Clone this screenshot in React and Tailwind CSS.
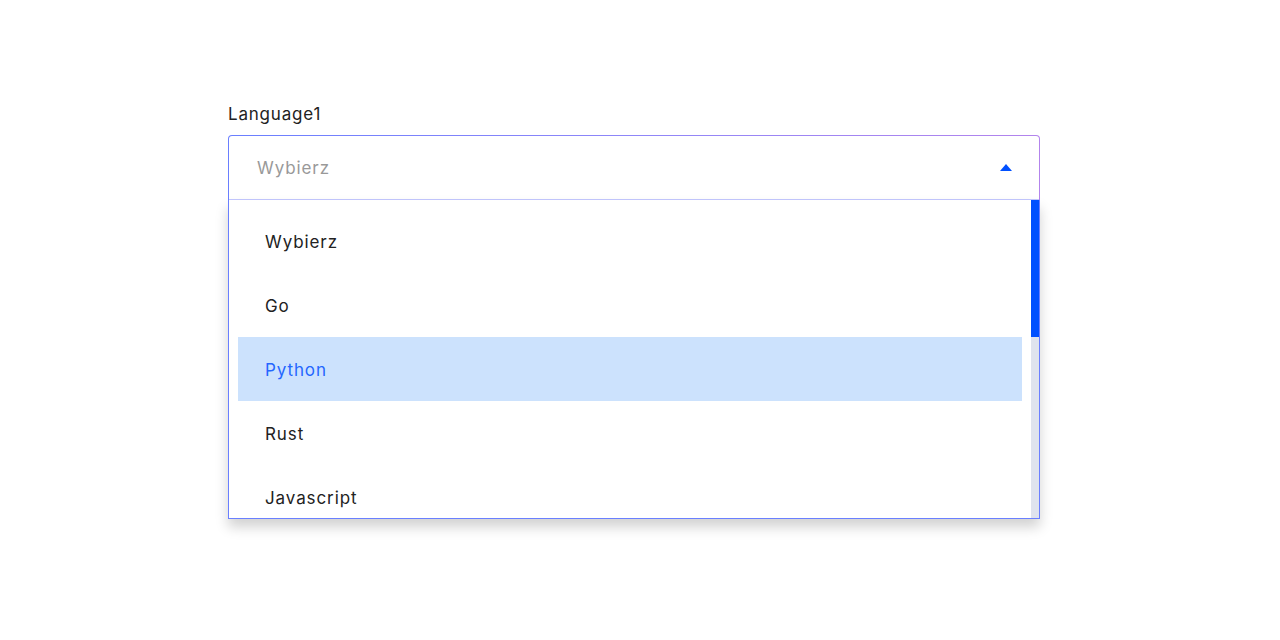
export default function App() {
  const items = ["Wybierz", "Go", "Python", "Rust", "Javascript"];
  return (
    <div className="w-[1280px] h-[640px] bg-white" style={{ fontFamily: "Inter, 'Noto Sans', sans-serif" }}>
      <div className="ml-[228px] pt-[103px] w-[812px]">
        <div className="text-[17px] leading-[22px] text-[#222] tracking-[0.8px] mb-[10px]">Language1</div>
        <div className="rounded-t-[4px] bg-linear-to-r from-[#6a7fff] via-[#8f86f8] to-[#b384ec] p-px pb-0">
          <div className="rounded-t-[3px] bg-white h-[64px] flex items-center justify-between pl-[28px] pr-[27px] border-b border-[#c4c8ff]">
            <span className="text-[17px] text-[#999] tracking-[0.9px] pt-[3px]">Wybierz</span>
            <svg width="12" height="7" viewBox="0 0 12 7">
              <path d="M0 7 L6 0 L12 7 Z" fill="#0050ff" />
            </svg>
          </div>
        </div>
        <div className="h-[319px] border-x border-b border-[#6a7fff] bg-white flex shadow-[0_8px_12px_rgba(0,0,0,0.18)]">
          <div className="flex-1 overflow-hidden px-[9px] pt-[9px]">
            {items.map((it) => (
              <div
                key={it}
                className={
                  "h-[64px] shrink-0 flex items-center pl-[27px] pt-[3px] text-[17px] tracking-[0.9px] " +
                  (it === "Python" ? "bg-[#cce2fd] text-[#2466ff]" : "text-[#222]")
                }
              >
                {it}
              </div>
            ))}
          </div>
          <div className="w-[8px] bg-[#dfe3ee] flex flex-col">
            <div className="h-[137px] bg-[#0050ff]" />
          </div>
        </div>
      </div>
    </div>
  );
}
